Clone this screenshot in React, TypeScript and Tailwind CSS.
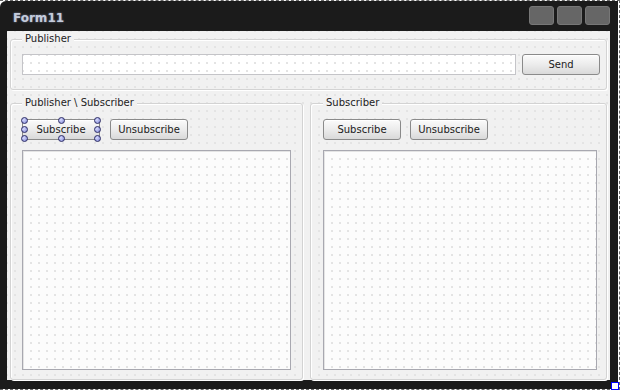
import React from "react";

const grid =
  "bg-[radial-gradient(circle,#e3e3e3_0.7px,transparent_0.9px)] bg-[length:8px_8px] bg-[position:4px_4px]";

function Button({ label }: { label: string }) {
  return (
    <button className="flex h-[21px] w-[78px] items-center justify-center rounded-[3px] border border-[#8a8a8a] bg-gradient-to-b from-[#fbfbfb] via-[#ececec] to-[#d9d9d9] text-[10px] text-[#1a1a1a] shadow-[inset_0_1px_0_#fff]">
      {label}
    </button>
  );
}

function Handle({ pos }: { pos: string }) {
  return (
    <span
      className={`absolute h-[7px] w-[7px] rounded-full border border-[#2c2c66] bg-[radial-gradient(circle_at_35%_35%,#d8dbff,#7f86d4)] ${pos}`}
    />
  );
}

function SelectedButton({ label }: { label: string }) {
  return (
    <div className="relative">
      <Button label={label} />
      <Handle pos="-left-[1px] -top-[2px]" />
      <Handle pos="left-[36px] -top-[2px]" />
      <Handle pos="left-[72px] -top-[2px]" />
      <Handle pos="-left-[1px] top-[7px]" />
      <Handle pos="left-[72px] top-[7px]" />
      <Handle pos="-left-[1px] top-[16px]" />
      <Handle pos="left-[36px] top-[16px]" />
      <Handle pos="left-[72px] top-[16px]" />
    </div>
  );
}

function Group({
  title,
  className,
  children,
}: {
  title: string;
  className: string;
  children: React.ReactNode;
}) {
  return (
    <fieldset
      className={`rounded-[3px] border border-[#d3d3d3] shadow-[inset_1px_1px_0_#fff,1px_1px_0_#fff] ${className}`}
    >
      <legend className="bg-[#f1f1f1] px-[3px] text-[10px] leading-[12px] text-[#222]">
        {title}
      </legend>
      {children}
    </fieldset>
  );
}

function ListBox() {
  return (
    <div
      className={`flex-1 border border-[#a8a8b0] bg-[#fcfcfc] shadow-[inset_1px_1px_0_#e4e4e4] ${grid}`}
    />
  );
}

export default function App() {
  return (
    <div className="relative h-[390px] w-[620px] overflow-hidden bg-white font-['DejaVu_Sans',sans-serif]">
      <div className="h-full w-full border-t border-r border-b border-dashed border-[#666]">
        <div className="flex h-full w-[618px] flex-col rounded-tl-[6px] bg-[#1b1b1b]">
          {/* title bar */}
          <div className="flex h-[30px] items-center justify-between pl-[13px] pr-[8px]">
            <span className="pt-[3px] text-[12px] font-bold text-[#c4cbdb] [text-shadow:0_0_2px_#7d8aa8]">
              Form11
            </span>
            <div className="flex gap-[3px] pb-[2px]">
              <div className="h-[19px] w-[25px] rounded-[3px] border border-[#777] bg-[#666]" />
              <div className="h-[19px] w-[25px] rounded-[3px] border border-[#777] bg-[#666]" />
              <div className="h-[19px] w-[25px] rounded-[3px] border border-[#777] bg-[#666]" />
            </div>
          </div>

          {/* client area */}
          <div
            className={`ml-[7px] mr-[8px] mb-[7px] flex h-[349px] flex-col bg-[#f1f1f1] pl-[3px] pr-[3px] pt-[2px] ${grid}`}
          >
            <Group title="Publisher" className="pl-[11px] pr-[6px] pt-[9px] pb-[14px]">
              <div className="flex items-center gap-[6px]">
                <div
                  className={`h-[21px] flex-1 border border-[#c4c4c8] bg-white ${grid}`}
                />
                <Button label="Send" />
              </div>
            </Group>

            <div className="mt-[7px] flex flex-1 gap-[7px]">
              <Group
                title="Publisher \ Subscriber"
                className="flex w-[293px] flex-col pl-[11px] pr-[11px] pt-[10px] pb-[9px]"
              >
                <div className="flex h-full flex-col gap-[10px]">
                  <div className="flex gap-[10px]">
                    <SelectedButton label="Subscribe" />
                    <Button label="Unsubscribe" />
                  </div>
                  <ListBox />
                </div>
              </Group>
              <Group
                title="Subscriber"
                className="flex w-[297px] flex-col pl-[12px] pr-[9px] pt-[10px] pb-[9px]"
              >
                <div className="flex h-full flex-col gap-[10px]">
                  <div className="flex gap-[9px]">
                    <Button label="Subscribe" />
                    <Button label="Unsubscribe" />
                  </div>
                  <ListBox />
                </div>
              </Group>
            </div>
          </div>
        </div>
      </div>
      <span className="absolute bottom-0 right-[1px] h-[8px] w-[8px] border border-[#0000ff] bg-white" />
    </div>
  );
}
